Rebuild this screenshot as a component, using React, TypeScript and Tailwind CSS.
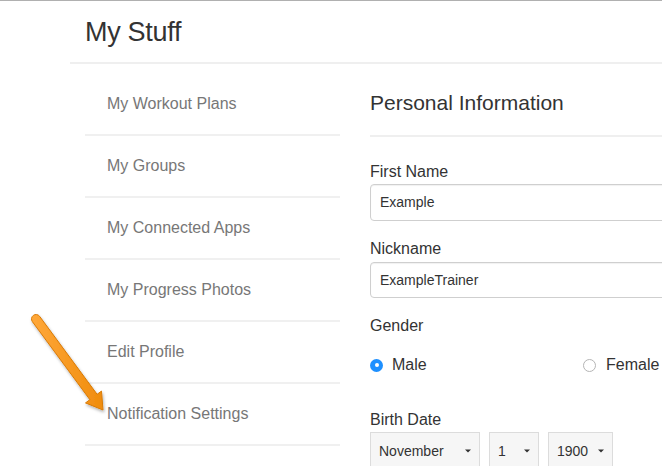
import React from "react";

const items = [
  "My Workout Plans",
  "My Groups",
  "My Connected Apps",
  "My Progress Photos",
  "Edit Profile",
  "Notification Settings",
];

function Caret() {
  return (
    <svg width="6" height="4" viewBox="0 0 6 4" className="shrink-0">
      <path d="M0 0.5 L6 0.5 L3 3.5 Z" fill="#333" />
    </svg>
  );
}

function Select({ value, w }: { value: string; w: string }) {
  return (
    <div
      className={`${w} h-[38px] shrink-0 flex items-center justify-between pl-[8px] pr-[8px] bg-[#f6f6f6] border border-[#dcdcdc] text-[14px] text-[#333]`}
    >
      <span>{value}</span>
      <Caret />
    </div>
  );
}

export default function App() {
  return (
    <div
      className="relative w-[662px] h-[466px] overflow-hidden bg-white border-t border-[#b0b0b0]"
      style={{ fontFamily: '"Liberation Sans", Arial, Helvetica, sans-serif' }}
    >
      {/* Header */}
      <div className="ml-[70px] pl-[15px] pt-[15px] pb-[14px] border-b-2 border-[#efefef]">
        <h1 className="text-[27px] leading-[32px] text-[#333] tracking-[-0.3px]">My Stuff</h1>
      </div>

      <div className="flex">
        {/* Sidebar */}
        <div className="ml-[85px] w-[255px] shrink-0 pt-[10px]">
          {items.map((t) => (
            <div
              key={t}
              className="h-[62px] box-border flex items-center pl-[22px] border-b-2 border-[#f0f0f0] text-[16px] text-[#777]"
            >
              {t}
            </div>
          ))}
        </div>

        {/* Main */}
        <div className="ml-[30px] w-[430px] shrink-0">
          <div className="pt-[27px] pb-[20px] border-b-2 border-[#efefef]">
            <h2 className="text-[21px] leading-[24px] text-[#333]">Personal Information</h2>
          </div>

          <div className="mt-[25px] text-[16px] leading-[20px] text-[#333]">First Name</div>
          <div className="mt-[2px] h-[37px] flex items-center pl-[9px] border border-[#cfcfcf] rounded-[4px] shadow-[inset_0_1px_1px_rgba(0,0,0,0.06)] text-[14px] text-[#333]">
            Example
          </div>

          <div className="mt-[18px] text-[16px] leading-[20px] text-[#333]">Nickname</div>
          <div className="mt-[3px] h-[36px] flex items-center pl-[9px] border border-[#cfcfcf] rounded-[4px] shadow-[inset_0_1px_1px_rgba(0,0,0,0.06)] text-[14px] text-[#333]">
            ExampleTrainer
          </div>

          <div className="mt-[18px] text-[16px] leading-[20px] text-[#333]">Gender</div>
          <div className="mt-[17px] grid grid-cols-2 w-[426px] h-[20px] text-[16px] text-[#333]">
            <div className="flex items-center">
              <span className="w-[13px] h-[13px] rounded-full bg-[#1e90ff] flex items-center justify-center">
                <span className="w-[4px] h-[4px] rounded-full bg-white" />
              </span>
              <span className="ml-[9px]">Male</span>
            </div>
            <div className="flex items-center">
              <span className="w-[13px] h-[13px] rounded-full border border-[#b5b5b5] bg-white" />
              <span className="ml-[10px]">Female</span>
            </div>
          </div>

          <div className="mt-[37px] text-[16px] leading-[20px] text-[#333]">Birth Date</div>
          <div className="mt-[2px] flex gap-[9px]">
            <Select value="November" w="w-[110px]" />
            <Select value="1" w="w-[50px]" />
            <Select value="1900" w="w-[65px]" />
          </div>
        </div>
      </div>

      {/* Annotation arrow */}
      <svg
        className="absolute left-0 top-0 pointer-events-none"
        width="662"
        height="466"
        viewBox="0 0 662 466"
      >
        <defs>
          <filter id="sh" x="-20%" y="-20%" width="140%" height="140%">
            <feDropShadow dx="1" dy="2" stdDeviation="1.5" floodColor="#000" floodOpacity="0.3" />
          </filter>
          <linearGradient id="og" x1="0" y1="0" x2="1" y2="0">
            <stop offset="0" stopColor="#ffa83a" />
            <stop offset="1" stopColor="#f08c0c" />
          </linearGradient>
        </defs>
        <path
          d="M39.6 315.3 L97.1 393.3 L101.5 390.1 L103 409 L85.5 401.9 L89.9 398.7 L32.4 320.7 A4.5 4.5 0 0 1 39.6 315.3 Z"
          fill="url(#og)"
          stroke="#d97a06"
          strokeWidth="1"
          strokeLinejoin="round"
          filter="url(#sh)"
        />
      </svg>
    </div>
  );
}
